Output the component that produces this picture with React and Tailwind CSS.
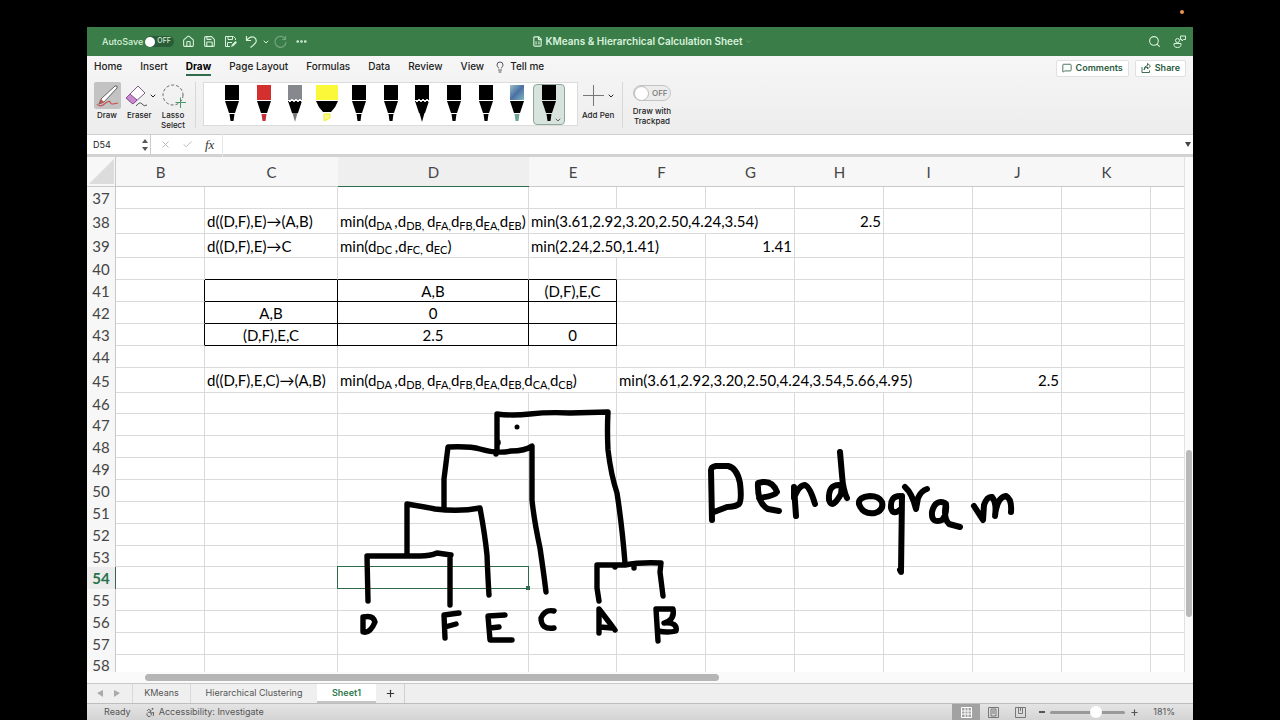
import { Fragment } from 'react'
import {
  Accessibility, ChevronDown, Ellipsis, FileSpreadsheet, House, Lightbulb, MessageSquare,
  Plus, Save, Search, X, Check
} from 'lucide-react'

const MENU = ['Home', 'Insert', 'Draw', 'Page Layout', 'Formulas', 'Data', 'Review', 'View']

const PENS = [
  { barrel: '#000', tip: '#000' },
  { barrel: '#d32f2f', tip: '#c62f3a' },
  { barrel: '#85898d', tip: '#77797c', pencil: true },
  { barrel: '#fbf83a', tip: '#f0ee2c', marker: true },
  { barrel: '#000', tip: '#000' },
  { barrel: '#000', tip: '#000' },
  { barrel: '#000', tip: '#000', pencil: true },
  { barrel: '#000', tip: '#000' },
  { barrel: '#000', tip: '#000' },
  { barrel: 'url(#galaxy)', tip: '#6fa59b' },
  { barrel: '#000', tip: '#000', active: true },
]

const COLUMNS = ['B', 'C', 'D', 'E', 'F', 'G', 'H', 'I', 'J', 'K', 'L']
const ROWS = Array.from({ length: 22 }, (_, i) => 37 + i)
const ROW_HEIGHTS = { 38: 'h-[25px]', 39: 'h-6', 45: 'h-[25px]', 46: 'h-[21px]', 53: 'h-[21px]', 58: 'h-5' }

// "_XX" marks a subscript, "|" ends it
const CELLS = {
  C38: { text: 'd((D,F),E)→(A,B)' },
  D38: { text: 'min(d_DA |,d_DB, |d_FA,|d_FB,|d_EA,|d_EB|)' },
  E38: { text: 'min(3.61,2.92,3.20,2.50,4.24,3.54)', span: 3 },
  H38: { text: '2.5', align: 'right' },
  C39: { text: 'd((D,F),E)→C' },
  D39: { text: 'min(d_DC |,d_FC, |d_EC|)' },
  E39: { text: 'min(2.24,2.50,1.41)', span: 2 },
  G39: { text: '1.41', align: 'right' },
  D41: { text: 'A,B', align: 'center' },
  E41: { text: '(D,F),E,C', align: 'center' },
  C42: { text: 'A,B', align: 'center' },
  D42: { text: '0', align: 'center' },
  C43: { text: '(D,F),E,C', align: 'center' },
  D43: { text: '2.5', align: 'center' },
  E43: { text: '0', align: 'center' },
  C45: { text: 'd((D,F),E,C)→(A,B)' },
  D45: { text: 'min(d_DA |,d_DB, |d_FA,|d_FB,|d_EA,|d_EB,|d_CA,|d_CB|)', span: 2 },
  F45: { text: 'min(3.61,2.92,3.20,2.50,4.24,3.54,5.66,4.95)', span: 4 },
  J45: { text: '2.5', align: 'right' },
}

const ALIGN = { left: 'text-left', center: 'text-center', right: 'text-right' }

const TREE_INK = [
  // dendrogram
  'M497 452V414Q512 416 530 414T570 413L608 412Q607 430 608 450Q611 475 617 493Q622 525 625 563',
  'M444 508V479L448 447Q470 446 480 449Q497 454 511 451Q525 451 532 446V500Q534 520 540 548Q544 575 546 592',
  'M407 555V504Q425 507 435 509Q460 512 480 508Q485 535 487 555Q488 580 489 595',
  'M368 601L367 556H420Q430 556 437 553L451 555M450 556V605',
  'M599 601L597 588V565H625Q640 562 661 563L660 572L663 596',
  'M498 442V443M496 452V454M615 566V567M634 567V568',
  // leaf labels
  'M363 617V632Q370 634 375 622Q373 615 364 617',
  'M445 638L444 615L459 613M445 627L456 624',
  'M505 615L488 616L490 640L512 640M490 628L499 627',
  'M554 611Q545 609 541 618Q541 630 554 628',
  'M599 633V609Q606 618 615 630M600 627L612 628',
  'M658 641L656 609H673Q675 620 664 623Q678 622 676 631Q668 633 658 631',
]

const NOTE_INK = [
  'M712 520L711 470Q711 467 716 466H728Q737 468 740 483Q742 500 739 504Q735 507 727 507L714 512',
  'M759 498Q775 496 777 492Q773 481 763 482L758 483Q757 503 768 509L779 511',
  'M796 516L794 487V498Q799 485 805 485Q810 487 815 504',
  'M840 452L842 475Q843 490 847 498M840 485Q828 484 829 500Q832 510 841 494L842 485',
  'M870 496Q858 497 859 504Q863 515 875 513Q884 510 882 502Q879 496 870 496Z',
  'M900 496Q890 496 891 508Q893 516 901 509M902 496L901 572L900 570',
  'M905 487Q912 493 916 509L918 498Q921 491 927 489',
  'M945 503Q935 499 932 512Q931 524 942 520Q947 515 946 504Q943 518 949 524L960 527',
  'M974 506L983 520L984 505Q987 496 992 497Q997 503 995 516Q997 497 1006 496Q1012 499 1011 512',
]

function Pen({ barrel, tip, pencil, marker, active }) {
  const half = marker ? 11 : 7
  return (
    <button
      aria-label="Pen"
      className={`relative flex h-[41px] flex-1 justify-center ${active ? 'rounded-sm border border-[#8fa89b] bg-[#d7e3dc]' : 'border border-transparent'}`}
    >
      <svg width="24" height="38" viewBox="-12 0 24 38" className="shrink-0">
        <rect x={-half} y="0" width={half * 2} height="15" fill={barrel} />
        {marker ? (
          <>
            <path d="M-11 16H11Q9 22 4 27H-4Q-9 22 -11 16Z" fill="#000" />
            <path d="M-3 29H3V33L-3 36Z" fill="#fdfb8a" stroke={tip} />
          </>
        ) : (
          <>
            <path d="M-7 16H7L3 28H-3Z" fill="#000" />
            <path d={pencil ? 'M-2.500 28H2.500L0 37Z' : 'M-2.500 29H2.500L1.500 36H-1.500Z'} fill={tip} />
            {pencil && <path d="M-7 15L-5 17L-3 14L-1 17L1 14L3 17L5 14L7 17" fill="none" stroke="#fff" />}
          </>
        )}
      </svg>
      {active && <ChevronDown className="absolute right-0.5 bottom-0 size-2" />}
    </button>
  )
}

function RichText({ text }) {
  return text.split('|').map((part, i) => {
    const [base, sub] = part.split('_')
    return (
      <Fragment key={i}>
        {base}
        {sub && <sub className="text-[11px]">{sub}</sub>}
      </Fragment>
    )
  })
}

// gridline colours; C41:E43 has a black frame
function borderFor(col, row) {
  const inFrameRows = row >= 41 && row <= 43
  const inFrameCols = ['C', 'D', 'E'].includes(col)
  const right = inFrameRows && (inFrameCols || col === 'B') ? 'border-r-black' : 'border-r-[#dadada]'
  const bottom = inFrameCols && row >= 40 && row <= 43 ? 'border-b-black' : 'border-b-[#dadada]'
  return `${right} ${bottom}`
}

function GridRow({ row }) {
  const cells = []
  for (let i = 0; i < COLUMNS.length; i++) {
    const col = COLUMNS[i]
    const cell = CELLS[col + row] || {}
    const selected = col === 'D' && row === 54
    cells.push(
      <td
        key={col}
        colSpan={cell.span || 1}
        className={`border-r border-b p-0 px-0.5 whitespace-nowrap ${borderFor(col, row)} ${ALIGN[cell.align || 'left']} ${selected ? 'relative' : ''}`}
      >
        {cell.text && <RichText text={cell.text} />}
        {selected && (
          <span className="absolute -inset-px border border-[#2f6b4c]">
            <span className="absolute -right-0.5 -bottom-0.5 size-1 bg-[#2f6b4c]" />
          </span>
        )}
      </td>
    )
    i += (cell.span || 1) - 1
  }
  return (
    <tr className={ROW_HEIGHTS[row] || 'h-[22px]'}>
      <th className={`border-r p-0 text-[15px] leading-4 ${row === 54 ? 'border-[#2f6b4c] bg-[#ececec] font-bold text-[#26724a]' : 'border-[#c8c8c8] bg-[#f7f7f7] font-normal text-[#454545]'}`}>
        {row}
      </th>
      {cells}
    </tr>
  )
}

function Sheet() {
  return (
    <div className="relative min-h-0 flex-1 overflow-hidden bg-white">
      <table className="w-full table-fixed border-separate border-spacing-0 font-['Lato',sans-serif] text-[15px] leading-5 text-black">
        <colgroup>
          <col className="w-[29px]" />
          <col className="w-[89px]" />
          <col className="w-[133px]" />
          <col className="w-[191px]" />
          <col className="w-[88px]" />
          {COLUMNS.slice(4, -1).map((c) => <col key={c} className="w-[89px]" />)}
          <col />
        </colgroup>
        <thead>
          <tr className="h-[30px] bg-[#f7f7f7] text-[#454545]">
            <th className="border-r border-b border-[#c8c8c8] p-0">
              <svg width="25" height="25" viewBox="0 0 25 25" className="ml-0.5">
                <path d="M25 0V25H0Z" fill="#dcdcdc" />
              </svg>
            </th>
            {COLUMNS.map((c) => (
              <th key={c} className={`border-b p-0 text-[15px] font-normal ${c === 'D' ? 'border-[#2f6b4c] bg-[#efefef]' : 'border-[#c8c8c8]'}`}>
                {c !== 'L' && c}
              </th>
            ))}
          </tr>
        </thead>
        <tbody>
          {ROWS.map((row) => <GridRow key={row} row={row} />)}
        </tbody>
      </table>

      {/* Pen strokes over the cells */}
      <svg
        role="img"
        aria-label="Dendogram"
        className="pointer-events-none absolute top-[243px] left-[243px]"
        width="700"
        height="260"
        viewBox="330 400 700 260"
        fill="none"
        stroke="#000"
        strokeLinecap="round"
        strokeLinejoin="round"
      >
        <g strokeWidth="5.400">
          {TREE_INK.map((d) => <path key={d} d={d} />)}
        </g>
        <g strokeWidth="6">
          {NOTE_INK.map((d) => <path key={d} d={d} />)}
        </g>
        <circle cx="517" cy="427" r="2.500" fill="#000" stroke="none" />
      </svg>

      {/* Vertical scrollbar */}
      <div className="absolute inset-y-0 right-0 w-[9px] border-l border-[#e2e2e2] bg-[#fafafa]">
        <div className="mt-[293px] ml-px h-[167px] w-1.5 rounded-full bg-[#b9b9b9]" />
      </div>
    </div>
  )
}

function TitleBar() {
  return (
    <div className="flex h-[29px] shrink-0 items-center justify-between bg-[#3a7d48] pr-[7px] pl-[15px] text-[#d9f2dc]">
      <div className="flex flex-1 items-center">
        <label htmlFor="autosave" className="text-[9px] font-medium">AutoSave</label>
        <button id="autosave" role="switch" aria-checked="false" className="ml-0.5 flex h-[11px] w-[29px] items-center gap-0.5 rounded-full bg-[#2b5c38] text-[7px] font-medium">
          <span className="size-[10px] rounded-full bg-white" />
          OFF
        </button>
        <div className="ml-2 flex items-center gap-2">
          <button aria-label="Home"><House size={13} strokeWidth={2} /></button>
          <button aria-label="Save"><Save size={13} strokeWidth={2} /></button>
          <button aria-label="Save as">
            <svg width="13" height="13" viewBox="0 0 13 13" fill="none" stroke="currentColor">
              <path d="M6 11.500H1.500V1.500H9.500L11.500 3.500V5M4 1.500V4.500H8.500V1.500M3.500 11.500V7.500H8" />
              <path d="M7 12L8 9.500L11.500 6L13 7.500L9.500 11Z" fill="currentColor" stroke="none" />
            </svg>
          </button>
          <span className="flex items-center gap-1">
            <button aria-label="Undo">
              <svg width="13" height="13" viewBox="0 0 13 13" fill="none" stroke="currentColor" strokeWidth="1.200">
                <path d="M1.500 1V5.500H6M1.500 5.500Q5 1 8.500 2Q12 3.500 11 7Q10 9 5.500 12.500" />
              </svg>
            </button>
            <button aria-label="Undo history"><ChevronDown size={8} strokeWidth={3} /></button>
          </span>
          <button aria-label="Redo" className="-ml-1 opacity-35">
            <svg width="13" height="13" viewBox="0 0 13 13" fill="none" stroke="currentColor" strokeWidth="1.200">
              <path d="M11.500 1V4.500H8M11.500 4.500A5.500 5.500 0 1 0 12 7" />
            </svg>
          </button>
          <button aria-label="More"><Ellipsis size={13} strokeWidth={3} /></button>
        </div>
      </div>
      <h1 className="flex items-center gap-[3px] text-[10px] font-semibold">
        <FileSpreadsheet size={11} strokeWidth={2.5} />
        KMeans &amp; Hierarchical Calculation Sheet
        <ChevronDown size={7} className="mr-1 opacity-40" />
      </h1>
      <div className="flex flex-1 justify-end gap-3">
        <button aria-label="Search"><Search size={13} strokeWidth={2} /></button>
        <button aria-label="Collaborate">
          <svg width="13" height="13" viewBox="0 0 13 13" fill="none" stroke="currentColor">
            <circle cx="4.500" cy="5.500" r="2" />
            <path d="M1 8.500H8Q8.500 12.500 4.500 12.500Q0.500 12.500 1 8.500ZM7.500 1H12.500V4.500H10.500L9 6V4.500H7.500Z" />
          </svg>
        </button>
      </div>
    </div>
  )
}

function Ribbon() {
  return (
    <div className="h-[79px] shrink-0 border-b border-[#cfcfcf] bg-linear-to-b from-[#f6f6f6] to-[#ededed]">
      <div className="flex h-6 items-center justify-between pr-[7px] pl-[7px]">
        <nav className="flex h-full items-start gap-[18px] pt-[3px] text-[10px] font-medium text-[#222]">
          {MENU.map((item) => (
            <button key={item} className={item === 'Draw' ? 'border-b-2 border-[#2f6b4c] font-bold text-black' : 'border-b-2 border-transparent'}>
              {item}
            </button>
          ))}
          <button className="-ml-2 flex items-center gap-1">
            <Lightbulb size={12} strokeWidth={1.5} />
            Tell me
          </button>
        </nav>
        <div className="flex gap-1.5 text-[9px] font-semibold text-[#2b5c40]">
          <button className="flex h-[17px] items-center gap-1 rounded-xs border border-[#e0e0e0] bg-white px-[5px]">
            <MessageSquare size={10} />
            Comments
          </button>
          <button className="flex h-[17px] items-center gap-1 rounded-xs border border-[#e0e0e0] bg-white px-[5px]">
            <svg width="10" height="10" viewBox="0 0 10 10" fill="none" stroke="currentColor" strokeWidth="0.900">
              <path d="M1 4V9.500H8.500V7.500M3 7Q3.500 4 6.500 4V6L9.500 3L6.500 0.500V2.500Q3 3 3 7Z" />
            </svg>
            Share
          </button>
        </div>
      </div>

      <div className="flex pt-0.5 pl-[6px] text-center text-[8px] leading-[10px] font-medium text-[#222]">
        <button className="flex w-7 flex-col items-center gap-px">
          <svg width="27" height="27" viewBox="0 0 27 27" fill="none" className="rounded-xs bg-[#c3c3c3]">
            <path d="M7 17L21 4Q24 3 23 6L10 20L5 22Z" fill="#fff" stroke="#444" strokeWidth="0.800" />
            <path d="M5 22L7 17L10 20Z" fill="#c94f4f" />
            <path d="M3 22Q5 25 9 23Q15 18 16 20T18 22T24 21" stroke="#c94f4f" strokeWidth="1.200" />
          </svg>
          Draw
        </button>
        <button className="ml-1 flex w-8 flex-col items-start gap-px">
          <span className="flex items-center">
            <svg width="24" height="27" viewBox="0 0 24 27" fill="none">
              <path d="M1 16L13 4L20 11L8 22Z" fill="#fff" stroke="#7d5a85" />
              <path d="M1 16L5 12L12 18L8 22Z" fill="#c98ad0" stroke="#8d4f98" />
              <path d="M11 24Q15 19 17 22T22 23" stroke="#555" />
            </svg>
            <ChevronDown size={8} strokeWidth={3} className="shrink-0" />
          </span>
          <span className="pl-0.5">Eraser</span>
        </button>
        <button className="flex w-8 flex-col items-center gap-px">
          <svg width="27" height="27" viewBox="0 0 27 27" fill="none">
            <circle cx="13" cy="13" r="10" stroke="#666" strokeDasharray="3 2" />
            <path d="M15.500 20.500H26M20.500 15.500V26" stroke="#4a9a68" />
          </svg>
          <span>Lasso<br />Select</span>
        </button>
        <div className="ml-1.5 h-[46px] border-l border-[#d8d8d8]" />
        <div className="ml-[7px] flex h-[44px] w-[375px] items-center border border-[#dcdcdc] bg-white pr-3 pl-3">
          <svg width="0" height="0" className="absolute">
            <linearGradient id="galaxy" x1="0" y1="0" x2="1" y2="1">
              <stop offset="0" stopColor="#9cc3c4" />
              <stop offset="0.5" stopColor="#4b6fa5" />
              <stop offset="1" stopColor="#7fb7c0" />
            </linearGradient>
          </svg>
          {PENS.map((pen, i) => <Pen key={i} {...pen} />)}
        </div>
        <button className="ml-1 flex w-8 flex-col items-start gap-px whitespace-nowrap">
          <span className="flex items-center">
            <svg width="25" height="27" viewBox="0 0 25 27" stroke="#777">
              <path d="M11.500 3V24M1 13.500H22" />
            </svg>
            <ChevronDown size={8} strokeWidth={3} className="shrink-0" />
          </span>
          Add Pen
        </button>
        <div className="ml-2 h-[46px] border-l border-[#d8d8d8]" />
        <div className="ml-2 flex w-[42px] flex-col items-center gap-[5px] pt-[3px]">
          <button id="trackpad" role="switch" aria-checked="false" className="flex h-4 w-[38px] items-center gap-[3px] rounded-full border border-[#c4c4c4] bg-[#ececec] text-[8px] text-[#777]">
            <span className="size-[15px] rounded-full border border-[#bbb] bg-white" />
            OFF
          </button>
          <label htmlFor="trackpad">Draw with<br />Trackpad</label>
        </div>
      </div>
    </div>
  )
}

function FormulaBar() {
  return (
    <div className="flex h-[22px] shrink-0 items-center border-b-[3px] border-[#d2d2d2] bg-white text-[#555]">
      <input aria-label="Name box" defaultValue="D54" className="w-[52px] pl-1.5 text-[9px] text-[#222]" />
      <span className="flex h-full w-3 flex-col items-center justify-center gap-[3px] border-r border-[#ccc]">
        <svg width="6" height="12" viewBox="0 0 6 12" fill="#555">
          <path d="M0 4L3 0L6 4ZM0 8L3 12L6 8Z" />
        </svg>
      </span>
      <button aria-label="Cancel" className="ml-[9px] text-[#b5b5b5]"><X size={11} /></button>
      <button aria-label="Enter" className="ml-[11px] text-[#b5b5b5]"><Check size={11} /></button>
      <button className="ml-3 font-['Liberation_Serif',serif] text-[13px] leading-4 text-[#333] italic">fx</button>
      <input aria-label="Formula" className="ml-2 min-w-0 flex-1 border-l border-[#e8e8e8]" />
      <button aria-label="Expand formula bar" className="pr-0.5">
        <svg width="6" height="5" viewBox="0 0 6 5" fill="#444"><path d="M0 0H6L3 5Z" /></svg>
      </button>
    </div>
  )
}

function SheetTabs() {
  return (
    <div className="flex h-5 shrink-0 items-center border-t border-[#c9c9c9] bg-[#efefef] text-[9px] text-[#555]">
      <button aria-label="Previous sheet" className="ml-2.5">
        <svg width="6" height="7" viewBox="0 0 6 7" fill="#aaa"><path d="M6 0V7L0 3Z" /></svg>
      </button>
      <button aria-label="Next sheet" className="mr-3 ml-[11px]">
        <svg width="6" height="7" viewBox="0 0 6 7" fill="#aaa"><path d="M0 0V7L6 3Z" /></svg>
      </button>
      <button className="h-full w-[59px] border-x border-[#d9d9d9] pb-0.5">KMeans</button>
      <button className="h-full w-[126px] pb-0.5">Hierarchical Clustering</button>
      <button className="h-full w-[59px] border-b-2 border-[#c4c4c4] bg-white font-semibold text-[#2f7a4d]">Sheet1</button>
      <button aria-label="Add sheet" className="flex h-full w-[29px] items-center justify-center border-r border-[#d0d0d0] text-[#333]">
        <Plus size={11} strokeWidth={2.5} />
      </button>
    </div>
  )
}

function StatusBar() {
  return (
    <div className="flex h-[17px] shrink-0 items-center border-t border-[#bdbdbd] bg-linear-to-b from-[#e4e4e4] to-[#d4d4d4] pr-[18px] pl-[17px] text-[9px] text-[#555]">
      <span>Ready</span>
      <button className="ml-3.5 flex items-center gap-[3px]">
        <Accessibility size={11} />
        Accessibility: Investigate
      </button>
      <div className="ml-auto flex h-full items-center">
        <button aria-label="Normal view" className="flex h-full w-7 items-center justify-center bg-[#a2a2a2]">
          <svg width="11" height="11" viewBox="0 0 11 11" stroke="#fff" fill="none">
            <path d="M0.500 0.500H10.500V10.500H0.500ZM4 0V11M7 0V11M0 4H11M0 7H11" />
          </svg>
        </button>
        <button aria-label="Page layout view" className="flex w-[27px] justify-center">
          <svg width="11" height="11" viewBox="0 0 11 11" stroke="#777" fill="none">
            <path d="M0.500 0.500H10.500V10.500H0.500ZM3 2V9H8V2ZM4 4H7M4 6H7" />
          </svg>
        </button>
        <button aria-label="Page break view" className="flex w-[27px] justify-center">
          <svg width="11" height="11" viewBox="0 0 11 11" stroke="#777" fill="none">
            <path d="M0.500 0.500H10.500V10.500H0.500ZM3.500 0V6.500H7.500V0M5.500 0V4" />
          </svg>
        </button>
        <button aria-label="Zoom out" className="ml-[5px] h-0.5 w-1.5 bg-[#555]" />
        <input
          aria-label="Zoom"
          type="range"
          min="0"
          max="100"
          defaultValue="63"
          className="mx-[5px] h-[3px] w-[75px] appearance-none rounded-full bg-[#999] [&::-webkit-slider-thumb]:size-3 [&::-webkit-slider-thumb]:appearance-none [&::-webkit-slider-thumb]:rounded-full [&::-webkit-slider-thumb]:bg-white"
        />
        <button aria-label="Zoom in"><Plus size={9} strokeWidth={3} /></button>
        <span className="ml-3 w-6 text-right">181%</span>
      </div>
    </div>
  )
}

export default function App() {
  return (
    <div className="relative flex h-screen flex-col bg-black px-[87px] pt-[27px] font-['Inter',sans-serif]">
      <span className="absolute top-[10px] right-24 size-1 rounded-full bg-[#e8954f]" />
      <TitleBar />
      <Ribbon />
      <FormulaBar />
      <Sheet />
      <div className="h-[11px] shrink-0 bg-[#fafafa] pt-0.5 pl-[58px]">
        <div className="h-[7px] w-[574px] rounded-full bg-[#b5b5b5]" />
      </div>
      <SheetTabs />
      <StatusBar />
    </div>
  )
}
